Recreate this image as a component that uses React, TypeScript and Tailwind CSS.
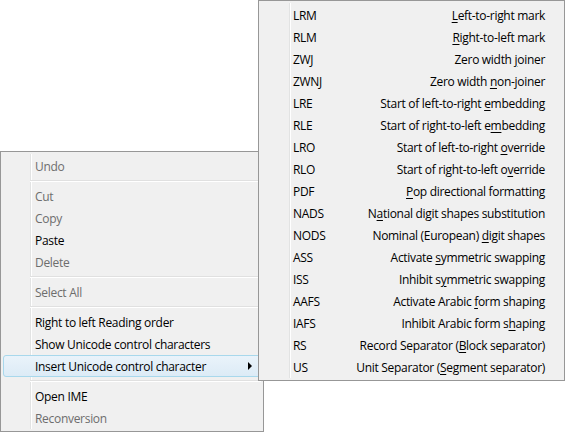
import React from "react";

type Item =
  | { kind: "sep" }
  | { kind: "item"; label: string; disabled?: boolean; active?: boolean; sub?: boolean };

const mainItems: Item[] = [
  { kind: "item", label: "Undo", disabled: true },
  { kind: "sep" },
  { kind: "item", label: "Cut", disabled: true },
  { kind: "item", label: "Copy", disabled: true },
  { kind: "item", label: "Paste" },
  { kind: "item", label: "Delete", disabled: true },
  { kind: "sep" },
  { kind: "item", label: "Select All", disabled: true },
  { kind: "sep" },
  { kind: "item", label: "Right to left Reading order" },
  { kind: "item", label: "Show Unicode control characters" },
  { kind: "item", label: "Insert Unicode control character", active: true, sub: true },
  { kind: "sep" },
  { kind: "item", label: "Open IME" },
  { kind: "item", label: "Reconversion", disabled: true },
];

// [code, before, underlined, after]
const subItems: [string, string, string, string][] = [
  ["LRM", "", "L", "eft-to-right mark"],
  ["RLM", "", "R", "ight-to-left mark"],
  ["ZWJ", "Zero width ", "j", "oiner"],
  ["ZWNJ", "Zero width ", "n", "on-joiner"],
  ["LRE", "Start of left-to-right ", "e", "mbedding"],
  ["RLE", "Start of right-to-left e", "m", "bedding"],
  ["LRO", "Start of left-to-right ", "o", "verride"],
  ["RLO", "Start of right-to-left o", "v", "erride"],
  ["PDF", "", "P", "op directional formatting"],
  ["NADS", "N", "a", "tional digit shapes substitution"],
  ["NODS", "Nominal (European) ", "d", "igit shapes"],
  ["ASS", "Activate ", "s", "ymmetric swapping"],
  ["ISS", "Inhibit s", "y", "mmetric swapping"],
  ["AAFS", "Activate Arabic ", "f", "orm shaping"],
  ["IAFS", "Inhibit Arabic form s", "h", "aping"],
  ["RS", "Record Separator (", "B", "lock separator)"],
  ["US", "Unit Separator (", "S", "egment separator)"],
];

const font = { fontFamily: '"Segoe UI", "Open Sans", "Noto Sans", sans-serif' };

function Arrow() {
  return (
    <svg width="4" height="8" viewBox="0 0 4 8" className="block">
      <path d="M0 0 L4 4 L0 8 Z" fill="#000" />
    </svg>
  );
}

export default function App() {
  return (
    <div
      className="relative w-[565px] h-[432px] bg-white overflow-hidden text-[12px] leading-none tracking-[-0.3px]"
      style={font}
    >
      {/* Main context menu */}
      <div className="absolute left-0 top-[151px] w-[264px] h-[281px] border border-[#979797] bg-[#f0f0f0] p-[2px] pt-[3px]">
        <div className="absolute left-[29px] top-[2px] bottom-[2px] w-[2px] border-l border-[#e2e3e3] border-r border-r-white" />
        <div className="relative flex flex-col">
          {mainItems.map((it, i) =>
            it.kind === "sep" ? (
              <div key={i} className="h-[8px] flex items-center pl-[27px]">
                <div className="h-[2px] w-full border-t border-[#e0e0e0] border-b border-b-white" />
              </div>
            ) : (
              <div
                key={i}
                className={
                  "h-[22px] flex items-center justify-between pt-[2px] pl-[31px] pr-[8px] rounded-[3px] border " +
                  (it.active
                    ? "border-[#a8d8ec] bg-gradient-to-b from-[#eaf3fa] to-[#dcebf6]"
                    : "border-transparent") +
                  (it.disabled ? " text-[#6d6d6d]" : " text-black")
                }
              >
                <span>{it.label}</span>
                {it.sub && (
                  <span className="-mt-[2px]">
                    <Arrow />
                  </span>
                )}
              </div>
            )
          )}
        </div>
      </div>

      {/* Submenu */}
      <div className="absolute left-[258px] top-0 w-[307px] h-[381px] border border-[#979797] bg-[#f0f0f0] p-[2px] pt-[3px]">
        <div className="absolute left-[30px] top-[2px] bottom-[2px] w-[2px] border-l border-[#e2e3e3] border-r border-r-white" />
        <div className="relative flex flex-col">
          {subItems.map(([code, a, u, b], i) => (
            <div key={i} className="h-[22px] flex items-center justify-between pt-[2px] pl-[32px] pr-[17px] text-black">
              <span>{code}</span>
              <span>
                {a}
                <span className="underline underline-offset-[2px]">{u}</span>
                {b}
              </span>
            </div>
          ))}
        </div>
      </div>
    </div>
  );
}
